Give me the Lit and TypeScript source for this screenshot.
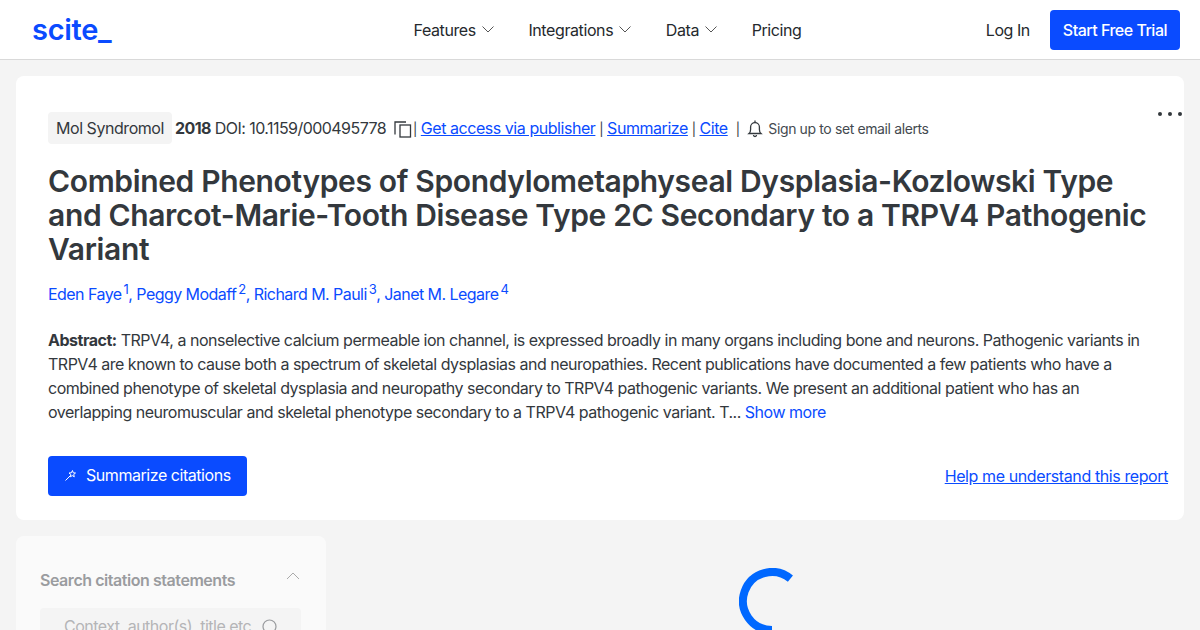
import { html, LitElement, css } from 'lit';
import { customElement } from 'lit/decorators.js';

const chevron = html`<svg class="chevron" viewBox="0 0 12 7" width="12" height="7"><path d="M.5.5L6 6 11.500.5" fill="none" stroke="currentColor" stroke-width="1"/></svg>`;

@customElement('app-root')
export class AppRoot extends LitElement {
  static styles = css`
    :host {
      display: block;
      width: 1200px;
      height: 630px;
      overflow: hidden;
      background: #f4f4f4;
      font-family: Inter, "Liberation Sans", sans-serif;
      font-size: 16px;
      color: #33383d;
      letter-spacing: -0.45px;
    }

    * {
      box-sizing: border-box;
    }

    a {
      color: #0a4bff;
    }

    .topbar {
      height: 60px;
      padding: 0 20px 0 32px;
      display: grid;
      grid-template-columns: 1fr auto 1fr;
      align-items: center;
      background: #fff;
      border-bottom: 1px solid #d9d9d9;
    }

    .logo {
      font-size: 29px;
      font-weight: 600;
      color: #0a4bff;
      letter-spacing: -0.3px;
    }

    .nav {
      margin-left: 3px;
      display: flex;
      gap: 34.6px;
      color: #25292d;
      letter-spacing: -0.4px;
    }

    .nav-item {
      display: flex;
      align-items: center;
      gap: 6px;
    }

    .chevron {
      color: #555;
    }

    .actions {
      display: flex;
      justify-content: flex-end;
      align-items: center;
      gap: 20px;
      color: #25292d;
    }

    .trial {
      height: 40px;
      padding: 0 13px;
      display: flex;
      align-items: center;
      background: #0a4bff;
      color: #fff;
      font-weight: 500;
      letter-spacing: -0.5px;
      border-radius: 4px;
    }

    .page {
      padding: 16px;
    }

    .card {
      position: relative;
      height: 444px;
      padding: 36px 16px 0 32px;
      background: #fff;
      border-radius: 8px;
    }

    .meta {
      height: 32px;
      line-height: 32px;
      white-space: nowrap;
      letter-spacing: -0.55px;
    }

    .meta a {
      letter-spacing: -0.45px;
    }

    .journal {
      display: inline-block;
      height: 32px;
      padding: 0 8px;
      margin-right: -1px;
      background: #f4f4f4;
      border-radius: 4px;
      letter-spacing: -0.45px;
    }

    .sep {
      font-size: 13px;
    }

    .copy {
      vertical-align: -4px;
      margin: 0 1px 0 4px;
    }

    .bell {
      vertical-align: -4px;
      margin: 0 1px 0 4px;
    }

    .alerts {
      font-size: 14px;
      letter-spacing: -0.38px;
      color: #444a50;
    }

    .more {
      position: absolute;
      top: 36px;
      right: 2px;
      display: flex;
      gap: 6px;
    }

    .more span {
      width: 4px;
      height: 4px;
      border-radius: 50%;
      background: #33383d;
    }

    h1 {
      margin: 20px 0 0;
      font-size: 30px;
      line-height: 34px;
      font-weight: 600;
      letter-spacing: -0.35px;
    }

    .authors {
      margin-top: 16px;
      line-height: 24px;
      color: #0a4bff;
      letter-spacing: -0.55px;
    }

    .authors sup {
      font-size: 13px;
      line-height: 0;
      margin-left: 2px;
    }

    .abstract {
      max-width: 1100px;
      margin: 22px 0 0;
      line-height: 24px;
      letter-spacing: -0.49px;
    }

    .abstract a {
      text-decoration: none;
    }

    .card-foot {
      margin-top: 32px;
      display: flex;
      justify-content: space-between;
      align-items: center;
    }

    .card-foot a {
      letter-spacing: -0.4px;
    }

    .summarize {
      height: 40px;
      padding: 0 16px 2px;
      display: flex;
      align-items: center;
      gap: 8px;
      background: #0a4bff;
      color: #fff;
      border-radius: 4px;
    }

    .lower {
      margin-top: 16px;
      display: flex;
    }

    .filters {
      width: 310px;
      height: 200px;
      padding: 34px 25px 34px 24px;
      background: #fafafa;
      border-radius: 8px;
    }

    .filter-head {
      display: flex;
      justify-content: space-between;
      font-weight: 600;
      color: #9a9c9f;
    }

    .filter-head svg {
      color: #aaa;
      margin: 2px 1px 0 0;
    }

    .search {
      margin-top: 18px;
      height: 36px;
      padding: 0 24px;
      display: flex;
      align-items: center;
      justify-content: space-between;
      background: #f4f4f4;
      border-radius: 4px;
      color: #b4b5b7;
      white-space: nowrap;
      letter-spacing: -0.5px;
    }

    .results {
      flex: 1;
      display: flex;
      justify-content: center;
      padding: 32px 0 0 34px;
    }
  `;

  render() {
    return html`
      <header class="topbar">
        <div class="logo">scite_</div>
        <nav class="nav">
          <span class="nav-item">Features ${chevron}</span>
          <span class="nav-item">Integrations ${chevron}</span>
          <span class="nav-item">Data ${chevron}</span>
          <span class="nav-item">Pricing</span>
        </nav>
        <div class="actions">
          <span>Log In</span>
          <span class="trial">Start Free Trial</span>
        </div>
      </header>
      <main class="page">
        <section class="card">
          <div class="meta">
            <span class="journal">Mol Syndromol</span>
            <b>2018</b> DOI: 10.1159/000495778
            <svg class="copy" width="18" height="17" viewBox="0 0 18 17" fill="none" stroke="#33383d" stroke-width="1.300"><path d="M1 13.500V1h11"/><rect x="6" y="4" width="10.500" height="12"/></svg><span class="sep">|</span> <a href="#">Get access via publisher</a> <span class="sep">|</span> <a href="#">Summarize</a> <span class="sep">|</span> <a href="#">Cite</a> &nbsp;<span class="sep">|</span>
            <svg class="bell" width="16" height="18" viewBox="0 0 16 18" fill="none" stroke="#33383d" stroke-width="1.300"><path d="M2 13.500c1.200-1 1.600-2 1.600-4V7a4.400 4.400 0 0 1 8.800 0v2.500c0 2 .4 3 1.600 4z"/><path d="M8 .500v2M6.500 15a1.500 1.500 0 0 0 3 0"/></svg>
            <span class="alerts">Sign up to set email alerts</span>
          </div>
          <div class="more"><span></span><span></span><span></span></div>
          <h1>Combined Phenotypes of Spondylometaphyseal Dysplasia-Kozlowski Type and Charcot-Marie-Tooth Disease Type 2C Secondary to a TRPV4 Pathogenic Variant</h1>
          <div class="authors">Eden Faye<sup>1</sup>, Peggy Modaff<sup>2</sup>, Richard M. Pauli<sup>3</sup>, Janet M. Legare<sup>4</sup></div>
          <p class="abstract"><b>Abstract:</b> TRPV4, a nonselective calcium permeable ion channel, is expressed broadly in many organs including bone and neurons. Pathogenic variants in TRPV4 are known to cause both a spectrum of skeletal dysplasias and neuropathies. Recent publications have documented a few patients who have a combined phenotype of skeletal dysplasia and neuropathy secondary to TRPV4 pathogenic variants. We present an additional patient who has an overlapping neuromuscular and skeletal phenotype secondary to a TRPV4 pathogenic variant. T... <a href="#">Show more</a></p>
          <div class="card-foot">
            <span class="summarize">
              <svg width="14" height="14" viewBox="0 0 14 14" fill="none" stroke="#fff" stroke-width="1"><path d="M1.500 12.500L6 8"/><path d="M8.500 2.500l.7 2.300 2.300.2-1.800 1.500.6 2.300-2-1.200-2 1.200.5-2.300L5 5l2.300-.2z"/></svg>
              Summarize citations
            </span>
            <a href="#">Help me understand this report</a>
          </div>
        </section>
        <section class="lower">
          <aside class="filters">
            <div class="filter-head">
              <span>Search citation statements</span>
              <svg width="14" height="8" viewBox="0 0 14 8"><path d="M1 7l6-6 6 6" fill="none" stroke="currentColor"/></svg>
            </div>
            <div class="search">
              <span>Context, author(s), title etc.</span>
              <svg width="15" height="15" viewBox="0 0 15 15" fill="none" stroke="#9a9c9f" stroke-width="1.200"><circle cx="7.500" cy="7.500" r="6.500"/></svg>
            </div>
          </aside>
          <div class="results">
            <svg width="66" height="66" viewBox="0 0 66 66" fill="none"><path d="M33 62A29 29 0 1 1 51.400 10.600" stroke="#0068ff" stroke-width="8"/></svg>
          </div>
        </section>
      </main>
    `;
  }
}
